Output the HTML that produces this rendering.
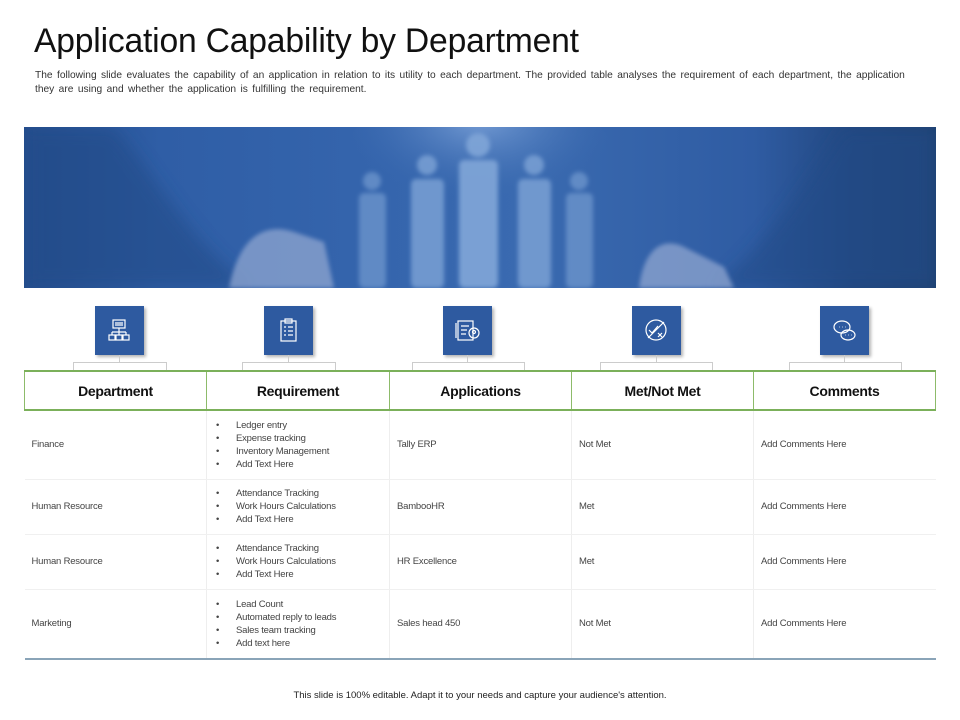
<!DOCTYPE html>
<html><head><meta charset="utf-8"><style>
*{margin:0;padding:0;box-sizing:border-box}
body{width:960px;height:720px;background:#fff;font-family:"Liberation Sans",Arial,sans-serif;position:relative;overflow:hidden;color:#333}
h1{position:absolute;left:34px;top:22px;font-size:34px;font-weight:normal;color:#111;letter-spacing:-0.2px;white-space:nowrap;transform:scaleX(0.99);transform-origin:left}
.sub{position:absolute;left:35px;top:69px;width:1000px;font-size:10.2px;line-height:13.5px;color:#333;word-spacing:1.6px;white-space:nowrap}
.band{position:absolute;left:24px;top:127px;width:912px;height:161px;background:linear-gradient(90deg,#254e8e 0%,#2f5ea6 15%,#3565ad 40%,#3a6ab0 55%,#2f5ca3 80%,#22477f 91%,#1f4170 100%);overflow:hidden}
.icon{position:absolute;top:306px;width:49px;height:49px;background:#2e5aa0;box-shadow:2px 2px 3px rgba(0,0,0,.3)}
.conn{position:absolute;top:362px;height:8px;border:1px solid #ccc;border-bottom:none}
.vl{position:absolute;top:355px;width:1px;height:7px;background:#ccc}
table{position:absolute;left:24px;top:370px;width:912px;border-collapse:collapse;font-size:9.5px;color:#444;letter-spacing:-0.2px}
th{height:39px;font-size:14px;font-weight:bold;color:#111;letter-spacing:-0.3px;border:1px solid #8dbb6a;border-top:2px solid #7bb05a;border-bottom:2px solid #7bb05a}
td{padding-left:7px;border-left:1px solid #eee;border-bottom:1px solid #f0f0f0;vertical-align:middle}
td:first-child{border-left:none}
tr.last td{border-bottom:2px solid #8aa4b8}
ul{list-style:none;margin-left:2px}
li{line-height:13px}
li:before{content:"•";display:inline-block;width:20px}
.foot{position:absolute;top:690px;left:0;width:960px;text-align:center;font-size:9.5px;color:#222}
</style></head><body>
<h1>Application Capability by Department</h1>
<div class="sub">The following slide evaluates the capability of an application in relation to its utility to each department. The provided table analyses the requirement of each department, the application<br>they are using and whether the application is fulfilling the requirement.</div>
<div class="band">
<svg width="912" height="161" viewBox="0 0 912 161">
<defs><filter id="b"><feGaussianBlur stdDeviation="2"/></filter><filter id="b2"><feGaussianBlur stdDeviation="8"/></filter>
<radialGradient id="g" cx="0.5" cy="0.2" r="0.5"><stop offset="0" stop-color="#9fc0ee" stop-opacity=".6"/><stop offset="1" stop-color="#3a6ab0" stop-opacity="0"/></radialGradient></defs>
<ellipse cx="455" cy="40" rx="140" ry="80" fill="url(#g)"/>
<path d="M90 0 C140 60 170 120 230 161 L0 161 L0 0Z" fill="#244b88" opacity=".6" filter="url(#b2)"/>
<path d="M820 0 C780 60 740 120 690 161 L912 161 L912 0Z" fill="#244b88" opacity=".6" filter="url(#b2)"/>
<g fill="#7ea4d6" filter="url(#b)">
<g opacity=".6"><circle cx="348" cy="54" r="9"/><rect x="335" y="66" width="27" height="95" rx="5"/></g>
<g opacity=".6"><circle cx="555" cy="54" r="9"/><rect x="542" y="66" width="27" height="95" rx="5"/></g>
<g opacity=".8"><circle cx="403" cy="38" r="10"/><rect x="387" y="52" width="33" height="109" rx="5"/></g>
<g opacity=".8"><circle cx="510" cy="38" r="10"/><rect x="494" y="52" width="33" height="109" rx="5"/></g>
<g opacity=".95"><circle cx="454" cy="18" r="12"/><rect x="435" y="33" width="39" height="128" rx="5"/></g>
</g>
<path d="M205 161 C215 110 240 95 270 105 L300 115 L310 161Z" fill="#8fa6d0" opacity=".75" filter="url(#b)"/>
<path d="M615 161 C620 120 640 110 660 120 L700 140 L710 161Z" fill="#8fa6d0" opacity=".75" filter="url(#b)"/>
</svg></div>

<div class="icon" style="left:95px"><svg width="49" height="49" fill="none" stroke="#fff" stroke-width="1.2"><rect x="18" y="14" width="12" height="8"/><path d="M20 17h8M20 19h8M24 22v4M17 26h14M17 26v3M24 26v3M31 26v3"/><rect x="14" y="29" width="6" height="5"/><rect x="21" y="29" width="6" height="5"/><rect x="28" y="29" width="6" height="5"/></svg></div>
<div class="icon" style="left:264px"><svg width="49" height="49" fill="none" stroke="#fff" stroke-width="1.2"><rect x="17" y="15" width="15" height="20"/><rect x="21" y="13" width="7" height="4"/><path d="M20 21h2M24 21h5M20 25h2M24 25h5M20 29h2M24 29h5"/></svg></div>
<div class="icon" style="left:443px"><svg width="49" height="49" fill="none" stroke="#fff" stroke-width="1.2"><rect x="15" y="15" width="15" height="19"/><path d="M13 17v15M18 20h8M18 24h6M18 28h5"/><circle cx="31" cy="27" r="5"/><circle cx="31" cy="26" r="1.5"/></svg></div>
<div class="icon" style="left:632px"><svg width="49" height="49" fill="none" stroke="#fff" stroke-width="1.2"><circle cx="24" cy="24" r="10"/><path d="M17 24l3 3 6-7M26 27l4 4M30 27l-4 4M16 32l16-16"/></svg></div>
<div class="icon" style="left:820px"><svg width="49" height="49" fill="none" stroke="#fff" stroke-width="1.2"><ellipse cx="22" cy="21" rx="8" ry="6"/><ellipse cx="28" cy="29" rx="7" ry="5"/><path d="M19 21h.5M22 21h.5M25 21h.5M25 29h.5M28 29h.5M31 29h.5"/></svg></div>

<div class="vl" style="left:119px"></div><div class="conn" style="left:73px;width:94px"></div>
<div class="vl" style="left:288px"></div><div class="conn" style="left:242px;width:94px"></div>
<div class="vl" style="left:467px"></div><div class="conn" style="left:412px;width:113px"></div>
<div class="vl" style="left:656px"></div><div class="conn" style="left:600px;width:113px"></div>
<div class="vl" style="left:844px"></div><div class="conn" style="left:789px;width:113px"></div>

<table>
<tr><th style="width:182px">Department</th><th style="width:183px">Requirement</th><th style="width:182px">Applications</th><th style="width:182px">Met/Not Met</th><th>Comments</th></tr>
<tr style="height:69px"><td>Finance</td><td><ul><li>Ledger entry</li><li>Expense tracking</li><li>Inventory Management</li><li>Add Text Here</li></ul></td><td>Tally ERP</td><td>Not Met</td><td>Add Comments Here</td></tr>
<tr style="height:55px"><td>Human Resource</td><td><ul><li>Attendance Tracking</li><li>Work Hours Calculations</li><li>Add Text Here</li></ul></td><td>BambooHR</td><td>Met</td><td>Add Comments Here</td></tr>
<tr style="height:55px"><td>Human Resource</td><td><ul><li>Attendance Tracking</li><li>Work Hours Calculations</li><li>Add Text Here</li></ul></td><td>HR Excellence</td><td>Met</td><td>Add Comments Here</td></tr>
<tr class="last" style="height:70px"><td>Marketing</td><td><ul><li>Lead Count</li><li>Automated reply to leads</li><li>Sales team tracking</li><li>Add text here</li></ul></td><td>Sales head 450</td><td>Not Met</td><td>Add Comments Here</td></tr>
</table>
<div class="foot">This slide is 100% editable. Adapt it to your needs and capture your audience's attention.</div>
</body></html>
